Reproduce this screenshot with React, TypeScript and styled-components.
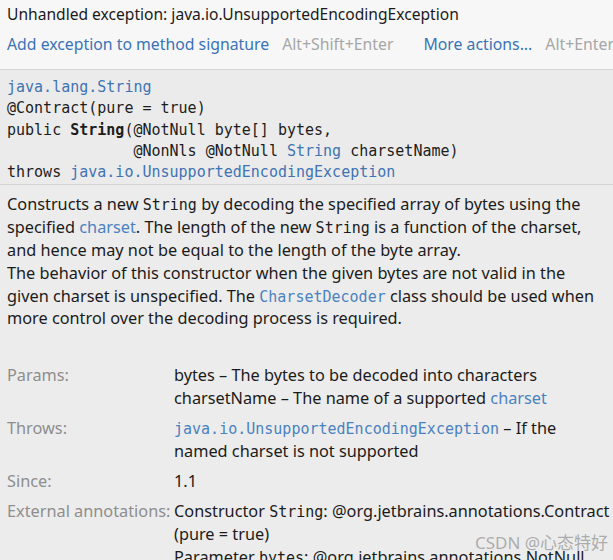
import styled, { createGlobalStyle } from "styled-components";

const GlobalStyle = createGlobalStyle`
  html, body {
    margin: 0;
    padding: 0;
    background: #ececec;
    overflow: hidden;
  }
`;

const sans = `"Noto Sans", "Open Sans", sans-serif`;
const mono = `"DejaVu Sans Mono", "Liberation Mono", monospace`;

const Popup = styled.div`
  position: relative;
  width: 613px;
  height: 560px;
  overflow: hidden;
  background: #ececec;
  font-family: ${sans};
  color: #1b1b1b;
`;

const Header = styled.div`
  display: flex;
  flex-direction: column;
  gap: 8px;
  padding: 3px 7px 14px;
  background: #f7f7f7;
  border-bottom: 1px solid #d6d6d6;
  white-space: nowrap;
`;

const Title = styled.div`
  font-size: 15.6px;
  line-height: 22px;
`;

const Actions = styled.div`
  display: flex;
  align-items: center;
  font-size: 15.8px;
  line-height: 22px;
`;

const ActionLink = styled.span`
  color: #3a73b6;
  cursor: pointer;
`;

const Shortcut = styled.span`
  color: #a6a6a6;
  margin-left: 13px;
  margin-right: 30px;
`;

const Signature = styled.pre`
  margin: 0;
  padding: 7px 7px 1px;
  background: #ebebeb;
  border-bottom: 1px solid #d2d2d2;
  font-family: ${mono};
  font-size: 15px;
  line-height: 21.3px;
  color: #1d1d1d;
`;

const Ref = styled.span`
  color: #3f74b3;
`;

const Bold = styled.b`
  font-weight: 700;
`;

const Description = styled.div`
  padding: 8px 7px 0;
  font-size: 16.3px;
  line-height: 22.8px;
  white-space: nowrap;
`;

const Code = styled.code<{ $link?: boolean }>`
  font-family: ${mono};
  font-size: 15px;
  line-height: 1;
  color: ${(p) => (p.$link ? "#4a82c0" : "inherit")};
`;

const Link = styled.span`
  color: #4a82c0;
`;

const Sections = styled.div`
  display: grid;
  grid-template-columns: 167px 1fr;
  row-gap: 7px;
  padding: 34px 7px 0;
  font-size: 16.3px;
  line-height: 23px;
  white-space: nowrap;
`;

const Label = styled.div`
  color: #8e8e8e;
`;

const Value = styled.div``;

const Watermark = styled.div`
  position: absolute;
  left: 475px;
  top: 529px;
  font-family: ${sans}, "Noto Sans CJK SC";
  font-size: 17px;
  color: rgba(150, 150, 150, 0.75);
  white-space: nowrap;
`;

export default function App() {
  return (
    <Popup>
      <GlobalStyle />
      <Header>
        <Title>Unhandled exception: java.io.UnsupportedEncodingException</Title>
        <Actions>
          <ActionLink>Add exception to method signature</ActionLink>
          <Shortcut>Alt+Shift+Enter</Shortcut>
          <ActionLink>More actions...</ActionLink>
          <Shortcut>Alt+Enter</Shortcut>
        </Actions>
      </Header>

      <Signature>
        <Ref>java.lang.String</Ref>
        {"\n@Contract(pure = true)\npublic "}
        <Bold>String</Bold>
        {"(@NotNull byte[] bytes,\n              @NonNls @NotNull "}
        <Ref>String</Ref>
        {" charsetName)\nthrows "}
        <Ref>java.io.UnsupportedEncodingException</Ref>
      </Signature>

      <Description>
        Constructs a new <Code>String</Code> by decoding the specified array of bytes using the
        <br />
        specified <Link>charset</Link>. The length of the new <Code>String</Code> is a function of the charset,
        <br />
        and hence may not be equal to the length of the byte array.
        <br />
        The behavior of this constructor when the given bytes are not valid in the
        <br />
        given charset is unspecified. The <Code $link>CharsetDecoder</Code> class should be used when
        <br />
        more control over the decoding process is required.
      </Description>

      <Sections>
        <Label>Params:</Label>
        <Value>
          bytes – The bytes to be decoded into characters
          <br />
          charsetName – The name of a supported <Link>charset</Link>
        </Value>
        <Label>Throws:</Label>
        <Value>
          <Code $link>java.io.UnsupportedEncodingException</Code> – If the
          <br />
          named charset is not supported
        </Value>
        <Label>Since:</Label>
        <Value>1.1</Value>
        <Label>External annotations:</Label>
        <Value>
          Constructor <Code>String</Code>: @org.jetbrains.annotations.Contract
          <br />
          (pure = true)
          <br />
          Parameter <Code>bytes</Code>: @org.jetbrains.annotations.NotNull
        </Value>
      </Sections>

      <Watermark>CSDN @心态特好</Watermark>
    </Popup>
  );
}
